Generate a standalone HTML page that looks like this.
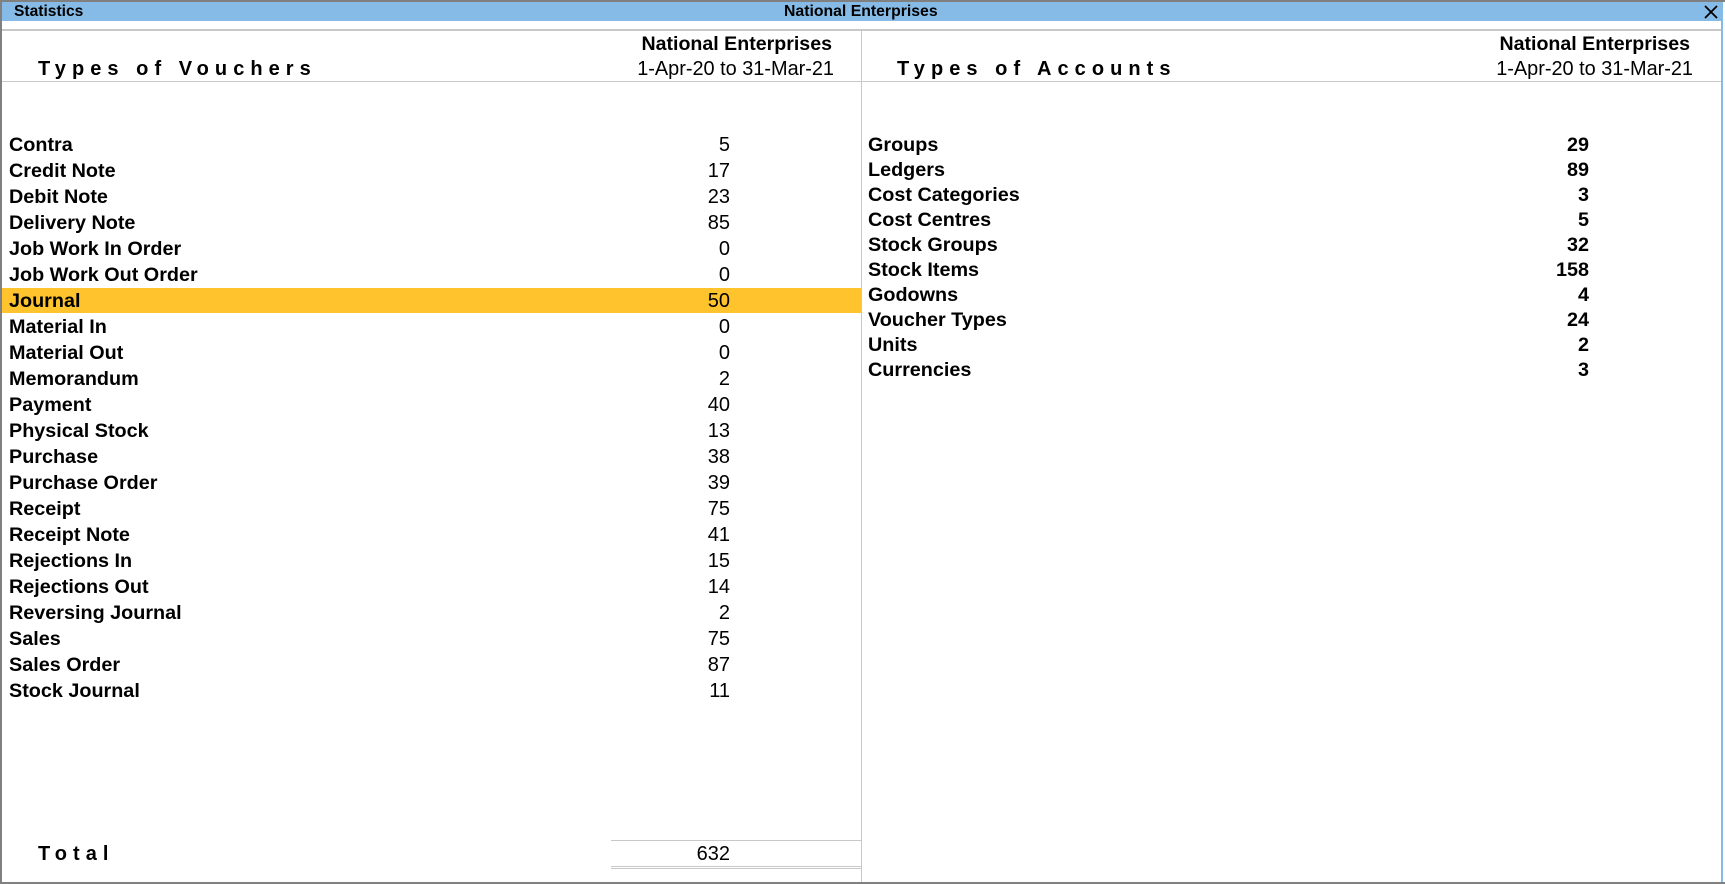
<!DOCTYPE html>
<html>
<head>
<meta charset="utf-8">
<style>
html,body{margin:0;padding:0;background:#fff;}
#p{position:relative;width:1725px;height:884px;overflow:hidden;background:#fff;font-family:"Liberation Sans",Arial,sans-serif;color:#000;}
.a{position:absolute;}
.t{position:absolute;white-space:nowrap;line-height:28px;height:28px;font-size:20px;}
.b{font-weight:bold;font-size:19.8px;}
.r{text-align:right;}
.h{font-size:19.6px;}
.d{font-size:19.9px;}
.sp{font-weight:bold;font-size:20px;letter-spacing:6.05px;}
</style>
</head>
<body>
<div id="p">
<div class="a" style="left:0;top:0;width:1725px;height:2px;background:#808080"></div>
<div class="a" style="left:0;top:2px;width:2px;height:882px;background:#808080"></div>
<div class="a" style="left:0;top:882px;width:1725px;height:2px;background:#808080"></div>
<div class="a" style="left:1721px;top:2px;width:2px;height:880px;background:#85bbe6"></div>
<div class="a" style="left:2px;top:2px;width:1721px;height:19px;background:#85bbe6"></div>
<div class="a" style="left:14px;top:3px;font-weight:bold;font-size:15.6px;line-height:18px;white-space:nowrap">Statistics</div>
<div class="a" style="left:784px;top:3px;font-weight:bold;font-size:15.8px;line-height:18px;white-space:nowrap">National Enterprises</div>
<svg class="a" style="left:1704px;top:5px" width="14" height="14" viewBox="0 0 14 14"><path d="M1 1L13 13M13 1L1 13" stroke="#000" stroke-width="1.8" fill="none"/></svg>

<div class="a" style="left:2px;top:29px;width:1719px;height:2px;background:#c8c8c8"></div>
<div class="a" style="left:2px;top:81px;width:1719px;height:1px;background:#c8c8c8"></div>
<div class="a" style="left:861px;top:31px;width:1px;height:851px;background:#c8c8c8"></div>

<div class="t b r h" style="left:532px;width:300px;top:30px">National Enterprises</div>
<div class="t r d" style="left:532px;width:302px;top:55px">1-Apr-20 to 31-Mar-21</div>
<div class="t sp" style="left:38px;top:55px">Types of Vouchers</div>
<div class="t b r h" style="left:1390px;width:300px;top:30px">National Enterprises</div>
<div class="t r d" style="left:1391px;width:302px;top:55px">1-Apr-20 to 31-Mar-21</div>
<div class="t sp" style="left:897px;top:55px">Types of Accounts</div>

<div class="a" style="left:2px;top:288px;width:859px;height:25px;background:#fec32d"></div>

<div class="t b" style="left:9px;top:131px">Contra</div><div class="t r" style="left:630px;width:100px;top:131px">5</div>
<div class="t b" style="left:9px;top:157px">Credit Note</div><div class="t r" style="left:630px;width:100px;top:157px">17</div>
<div class="t b" style="left:9px;top:183px">Debit Note</div><div class="t r" style="left:630px;width:100px;top:183px">23</div>
<div class="t b" style="left:9px;top:209px">Delivery Note</div><div class="t r" style="left:630px;width:100px;top:209px">85</div>
<div class="t b" style="left:9px;top:235px">Job Work In Order</div><div class="t r" style="left:630px;width:100px;top:235px">0</div>
<div class="t b" style="left:9px;top:261px">Job Work Out Order</div><div class="t r" style="left:630px;width:100px;top:261px">0</div>
<div class="t b" style="left:9px;top:287px">Journal</div><div class="t r" style="left:630px;width:100px;top:287px">50</div>
<div class="t b" style="left:9px;top:313px">Material In</div><div class="t r" style="left:630px;width:100px;top:313px">0</div>
<div class="t b" style="left:9px;top:339px">Material Out</div><div class="t r" style="left:630px;width:100px;top:339px">0</div>
<div class="t b" style="left:9px;top:365px">Memorandum</div><div class="t r" style="left:630px;width:100px;top:365px">2</div>
<div class="t b" style="left:9px;top:391px">Payment</div><div class="t r" style="left:630px;width:100px;top:391px">40</div>
<div class="t b" style="left:9px;top:417px">Physical Stock</div><div class="t r" style="left:630px;width:100px;top:417px">13</div>
<div class="t b" style="left:9px;top:443px">Purchase</div><div class="t r" style="left:630px;width:100px;top:443px">38</div>
<div class="t b" style="left:9px;top:469px">Purchase Order</div><div class="t r" style="left:630px;width:100px;top:469px">39</div>
<div class="t b" style="left:9px;top:495px">Receipt</div><div class="t r" style="left:630px;width:100px;top:495px">75</div>
<div class="t b" style="left:9px;top:521px">Receipt Note</div><div class="t r" style="left:630px;width:100px;top:521px">41</div>
<div class="t b" style="left:9px;top:547px">Rejections In</div><div class="t r" style="left:630px;width:100px;top:547px">15</div>
<div class="t b" style="left:9px;top:573px">Rejections Out</div><div class="t r" style="left:630px;width:100px;top:573px">14</div>
<div class="t b" style="left:9px;top:599px">Reversing Journal</div><div class="t r" style="left:630px;width:100px;top:599px">2</div>
<div class="t b" style="left:9px;top:625px">Sales</div><div class="t r" style="left:630px;width:100px;top:625px">75</div>
<div class="t b" style="left:9px;top:651px">Sales Order</div><div class="t r" style="left:630px;width:100px;top:651px">87</div>
<div class="t b" style="left:9px;top:677px">Stock Journal</div><div class="t r" style="left:630px;width:100px;top:677px">11</div>

<div class="t b" style="left:868px;top:131px">Groups</div><div class="t b r" style="left:1489px;width:100px;top:131px">29</div>
<div class="t b" style="left:868px;top:156px">Ledgers</div><div class="t b r" style="left:1489px;width:100px;top:156px">89</div>
<div class="t b" style="left:868px;top:181px">Cost Categories</div><div class="t b r" style="left:1489px;width:100px;top:181px">3</div>
<div class="t b" style="left:868px;top:206px">Cost Centres</div><div class="t b r" style="left:1489px;width:100px;top:206px">5</div>
<div class="t b" style="left:868px;top:231px">Stock Groups</div><div class="t b r" style="left:1489px;width:100px;top:231px">32</div>
<div class="t b" style="left:868px;top:256px">Stock Items</div><div class="t b r" style="left:1489px;width:100px;top:256px">158</div>
<div class="t b" style="left:868px;top:281px">Godowns</div><div class="t b r" style="left:1489px;width:100px;top:281px">4</div>
<div class="t b" style="left:868px;top:306px">Voucher Types</div><div class="t b r" style="left:1489px;width:100px;top:306px">24</div>
<div class="t b" style="left:868px;top:331px">Units</div><div class="t b r" style="left:1489px;width:100px;top:331px">2</div>
<div class="t b" style="left:868px;top:356px">Currencies</div><div class="t b r" style="left:1489px;width:100px;top:356px">3</div>

<div class="t sp" style="left:38px;top:840px">Total</div>
<div class="a" style="left:611px;top:840px;width:250px;height:1px;background:#c8c8c8"></div>
<div class="t r" style="left:630px;width:100px;top:840px">632</div>
<div class="a" style="left:611px;top:866px;width:250px;height:1px;background:#c8c8c8"></div>
<div class="a" style="left:611px;top:868px;width:250px;height:1px;background:#c8c8c8"></div>
</div>
</body>
</html>
